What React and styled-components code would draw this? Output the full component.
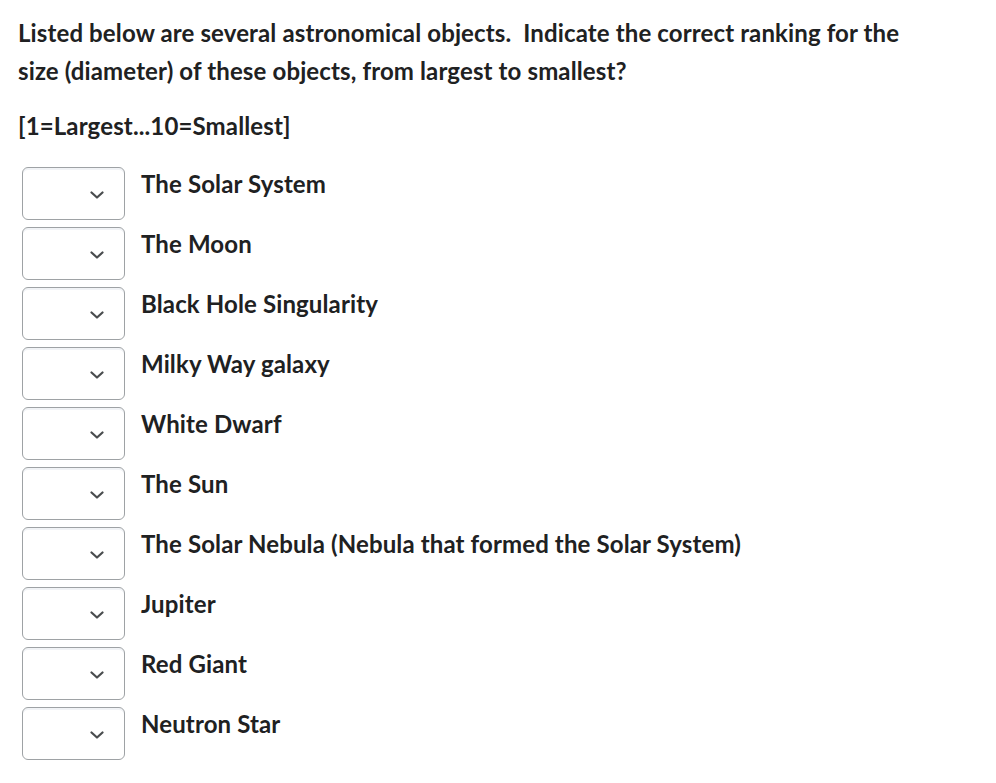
import React from "react";
import styled, { createGlobalStyle } from "styled-components";

const GlobalStyle = createGlobalStyle`
  html, body {
    margin: 0;
    padding: 0;
    background: #ffffff;
  }
  body {
    font-family: Lato, "Open Sans", "Liberation Sans", sans-serif;
    color: #202122;
  }
`;

const Page = styled.main`
  padding: 14px 0 0 18px;
`;

const Prompt = styled.p`
  margin: 0;
  font-size: 24px;
  line-height: 38px;
  font-weight: 700;
  letter-spacing: 0.13px;
  max-width: 920px;
`;

const Scale = styled.p`
  margin: 17px 0 0;
  font-size: 24px;
  line-height: 38px;
  font-weight: 700;
  letter-spacing: 0.13px;
`;

const List = styled.ul`
  list-style: none;
  margin: 22px 0 0;
  padding: 0 0 0 4px;
  display: flex;
  flex-direction: column;
  gap: 7px;
`;

const Row = styled.li`
  display: flex;
  align-items: flex-start;
  gap: 16px;
`;

const SelectBox = styled.div`
  position: relative;
  box-sizing: border-box;
  width: 103px;
  height: 53px;
  border: 1px solid #9ea2a5;
  border-radius: 6px;
  background: #ffffff;
  box-shadow: inset 0 2px 0 0 rgba(185, 194, 208, 0.2);
  flex-shrink: 0;
`;

const Chevron = styled.svg`
  position: absolute;
  left: 67px;
  top: 23px;
`;

const Label = styled.span`
  font-size: 24px;
  line-height: 30px;
  font-weight: 700;
  letter-spacing: 0.13px;
  padding-top: 2px;
`;

const items = [
  "The Solar System",
  "The Moon",
  "Black Hole Singularity",
  "Milky Way galaxy",
  "White Dwarf",
  "The Sun",
  "The Solar Nebula (Nebula that formed the Solar System)",
  "Jupiter",
  "Red Giant",
  "Neutron Star",
];

function RankSelect() {
  return (
    <SelectBox role="combobox" aria-label="rank">
      <Chevron width="14" height="8" viewBox="0 0 14 8" fill="none">
        <path d="M1.5 1.5 L7 6.5 L12.5 1.5" stroke="#494c4e" strokeWidth="2.2" strokeLinecap="round" strokeLinejoin="round" />
      </Chevron>
    </SelectBox>
  );
}

export default function App() {
  return (
    <>
      <GlobalStyle />
      <Page>
        <Prompt>
          Listed below are several astronomical objects.&nbsp; Indicate the correct ranking for the size (diameter) of these objects, from largest to smallest?
        </Prompt>
        <Scale>[1=Largest...10=Smallest]</Scale>
        <List>
          {items.map((name) => (
            <Row key={name}>
              <RankSelect />
              <Label>{name}</Label>
            </Row>
          ))}
        </List>
      </Page>
    </>
  );
}
